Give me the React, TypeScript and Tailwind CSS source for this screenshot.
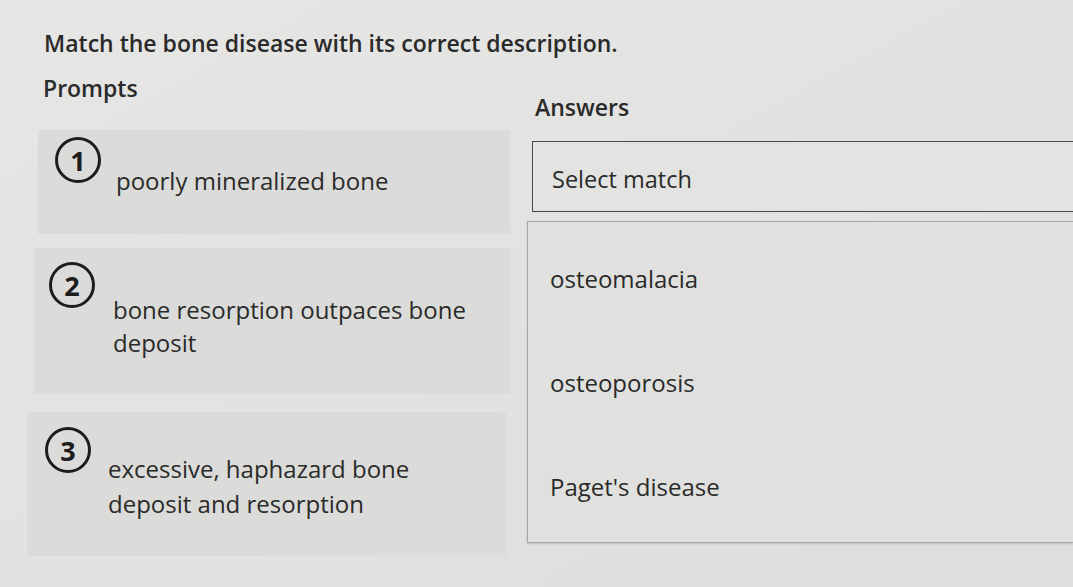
import React from "react";

function Num({ n }: { n: number }) {
  return (
    <div className="flex h-[46px] w-[46px] shrink-0 items-center justify-center rounded-full border-[3px] border-[#1c1c1c] text-[27px] font-bold leading-none text-[#1c1c1c]">
      {n}
    </div>
  );
}

export default function App() {
  return (
    <div
      className="h-[587px] w-[1073px] overflow-hidden bg-gradient-to-br from-[#e6e6e4] via-[#e2e2e0] to-[#dededc] text-[#2a2a2a]"
      style={{ fontFamily: '"Open Sans", "Noto Sans", sans-serif' }}
    >
      <div className="pl-[44px] pt-[27px] text-[23px] font-semibold leading-[32px]">
        Match the bone disease with its correct description.
      </div>
      <div className="flex">
        {/* Prompts */}
        <div className="w-[510px] shrink-0">
          <div className="pl-[43px] pt-[13px] text-[23px] font-semibold leading-[32px]">Prompts</div>
          <div className="ml-[38px] mt-[26px] flex h-[104px] w-[472px] items-start bg-[#dbdbd9] pl-[17px] pt-[7px]">
            <Num n={1} />
            <div className="ml-[15px] mt-[29px] text-[24px] leading-[30px]">poorly mineralized bone</div>
          </div>
          <div className="ml-[34px] mt-[14px] flex h-[146px] w-[476px] items-start bg-[#dbdbd9] pl-[15px] pt-[14px]">
            <Num n={2} />
            <div className="ml-[18px] mt-[31px] text-[24px] leading-[33px]">
              bone resorption outpaces bone
              <br />
              deposit
            </div>
          </div>
          <div className="ml-[27px] mt-[18px] flex h-[144px] w-[479px] items-start bg-[#dbdbd9] pl-[18px] pt-[15px]">
            <Num n={3} />
            <div className="ml-[17px] mt-[24px] text-[24px] leading-[35px]">
              excessive, haphazard bone
              <br />
              deposit and resorption
            </div>
          </div>
        </div>
        {/* Answers */}
        <div className="flex-1">
          <div className="pl-[25px] pt-[32px] text-[23px] font-semibold leading-[32px]">Answers</div>
          <div className="ml-[22px] mt-[18px] flex h-[71px] items-center border-[1.5px] border-r-0 border-[#484848] bg-[#e3e3e1] pl-[19px] pt-[5px] text-[23.5px] leading-[30px]">
            Select match
          </div>
          <div className="ml-[17px] mt-[9px] flex h-[322px] flex-col border border-r-0 border-[#a8a8a6] bg-[#e0e0de] pl-[22px] pt-[42px] text-[24px] leading-[30px] shadow-[0_1px_2px_rgba(0,0,0,0.15)]">
            <div>osteomalacia</div>
            <div className="mt-[74px]">osteoporosis</div>
            <div className="mt-[74px]">Paget's disease</div>
          </div>
        </div>
      </div>
    </div>
  );
}
